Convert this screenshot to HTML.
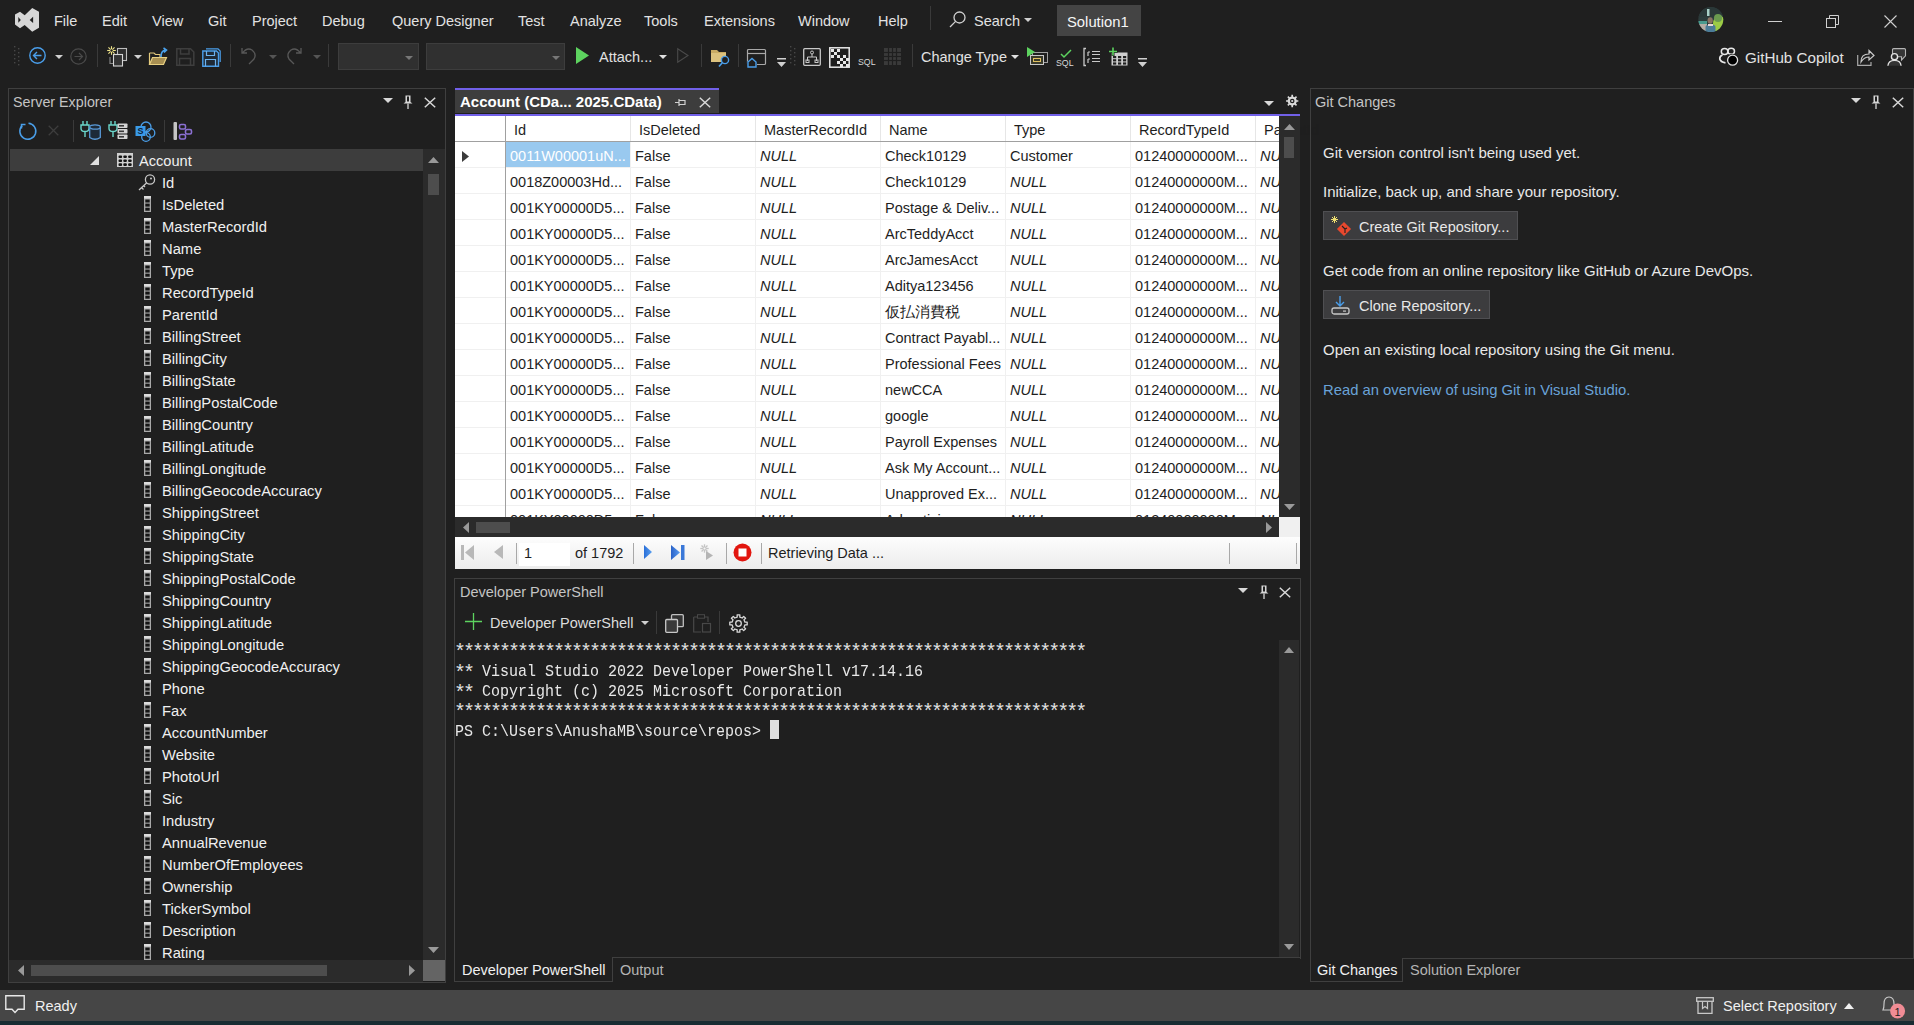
<!DOCTYPE html>
<html><head><meta charset="utf-8"><title>Visual Studio</title>
<style>
html,body{margin:0;padding:0;}
body{width:1914px;height:1025px;overflow:hidden;background:#1f1f1f;position:relative;font-family:"Liberation Sans",sans-serif;}
.t{position:absolute;white-space:nowrap;line-height:1;font-family:"Liberation Sans",sans-serif;}
.m{position:absolute;white-space:pre;line-height:1;font-family:"Liberation Mono",monospace;}
.r{position:absolute;}
svg.r{overflow:visible;}
</style></head><body>

<svg class="r" style="left:15px;top:7px;" width="25" height="26" viewBox="0 0 25 26"><path d="M5,4.8 L0,7.6 V17.6 L5,21.2 L9.7,18 L17.2,24.8 L24,20.75 V4.8 L17.2,0.9 L9.7,8.25 Z" fill="#d6d6d6"/><polygon points="3.3,10.1 3.3,15.75 5.8,12.9" fill="#1f1f1f"/><polygon points="18.1,9.8 18.1,16 14.7,12.9" fill="#1f1f1f"/></svg>
<div class="t " style="left:54px;top:13.73px;font-size:14.5px;color:#e2e2e2;">File</div>
<div class="t " style="left:102px;top:13.73px;font-size:14.5px;color:#e2e2e2;">Edit</div>
<div class="t " style="left:152px;top:13.73px;font-size:14.5px;color:#e2e2e2;">View</div>
<div class="t " style="left:208px;top:13.73px;font-size:14.5px;color:#e2e2e2;">Git</div>
<div class="t " style="left:252px;top:13.73px;font-size:14.5px;color:#e2e2e2;">Project</div>
<div class="t " style="left:322px;top:13.73px;font-size:14.5px;color:#e2e2e2;">Debug</div>
<div class="t " style="left:392px;top:13.73px;font-size:14.5px;color:#e2e2e2;">Query Designer</div>
<div class="t " style="left:518px;top:13.73px;font-size:14.5px;color:#e2e2e2;">Test</div>
<div class="t " style="left:570px;top:13.73px;font-size:14.5px;color:#e2e2e2;">Analyze</div>
<div class="t " style="left:644px;top:13.73px;font-size:14.5px;color:#e2e2e2;">Tools</div>
<div class="t " style="left:704px;top:13.73px;font-size:14.5px;color:#e2e2e2;">Extensions</div>
<div class="t " style="left:798px;top:13.73px;font-size:14.5px;color:#e2e2e2;">Window</div>
<div class="t " style="left:878px;top:13.73px;font-size:14.5px;color:#e2e2e2;">Help</div>
<div class="r" style="left:930px;top:6px;width:1px;height:24px;background:#3a3a3a;"></div>
<svg class="r" style="left:949px;top:11px;" width="17" height="17" viewBox="0 0 17 17"><circle cx="10.5" cy="6.5" r="5.5" fill="none" stroke="#d0d0d0" stroke-width="1.3"/><line x1="6.6" y1="10.4" x2="1" y2="16" stroke="#d0d0d0" stroke-width="1.3"/></svg>
<div class="t " style="left:974px;top:13.73px;font-size:14.5px;color:#e2e2e2;">Search</div>
<svg class="r" style="left:1024px;top:18px;" width="8" height="4" viewBox="0 0 8 4"><polygon points="0,0 8,0 4.0,4" fill="#d0d0d0"/></svg>
<div class="r" style="left:1057px;top:5px;width:84px;height:31px;background:#444444;"></div>
<div class="t " style="left:1067px;top:14.97px;font-size:14.8px;color:#f6f6f6;">Solution1</div>
<svg class="r" style="left:1698px;top:7px;" width="26" height="26" viewBox="0 0 26 26"><defs><clipPath id="avc"><circle cx="12.8" cy="12.6" r="12.5"/></clipPath><filter id="avb"><feGaussianBlur stdDeviation="0.7"/></filter></defs><g clip-path="url(#avc)"><rect x="0" y="0" width="26" height="26" fill="#2c3c3c"/><g filter="url(#avb)"><rect x="0" y="0" width="26" height="10" fill="#2a3838"/><rect x="0" y="14" width="9" height="3" fill="#4a9a8e"/><rect x="0" y="17" width="9" height="9" fill="#b4aca4"/><ellipse cx="21" cy="17" rx="6" ry="9" fill="#9ccc44"/><ellipse cx="20" cy="11" rx="4" ry="4" fill="#6a9a50"/><rect x="9" y="2" width="2.5" height="7" fill="#a8d0c8"/><rect x="7.5" y="18" width="10" height="9" rx="2" fill="#4c7c98"/><rect x="10" y="17" width="5" height="2" fill="#e8d8d8"/><ellipse cx="12.2" cy="13.5" rx="2.6" ry="3.2" fill="#8a7264"/></g></g></svg>
<div class="r" style="left:1768px;top:21px;width:14px;height:1px;background:#d0d0d0;"></div>
<svg class="r" style="left:1826px;top:15px;" width="13" height="13" viewBox="0 0 13 13"><rect x="0.5" y="3.5" width="9" height="9" fill="none" stroke="#d0d0d0"/><path d="M3.5,3.5 V0.5 H12.5 V9.5 H9.5" fill="none" stroke="#d0d0d0"/></svg>
<svg class="r" style="left:1884px;top:15px;" width="13" height="13" viewBox="0 0 13 13"><path d="M0.5,0.5 L12.5,12.5 M12.5,0.5 L0.5,12.5" stroke="#d0d0d0" stroke-width="1.1"/></svg>
<svg class="r" style="left:14px;top:46px;" width="6" height="21" viewBox="0 0 6 21"><rect x="0" y="0" width="1.4" height="1.4" fill="#474747"/><rect x="4" y="2" width="1.4" height="1.4" fill="#474747"/><rect x="0" y="4" width="1.4" height="1.4" fill="#474747"/><rect x="4" y="6" width="1.4" height="1.4" fill="#474747"/><rect x="0" y="8" width="1.4" height="1.4" fill="#474747"/><rect x="4" y="10" width="1.4" height="1.4" fill="#474747"/><rect x="0" y="12" width="1.4" height="1.4" fill="#474747"/><rect x="4" y="14" width="1.4" height="1.4" fill="#474747"/><rect x="0" y="16" width="1.4" height="1.4" fill="#474747"/><rect x="4" y="18" width="1.4" height="1.4" fill="#474747"/></svg>
<svg class="r" style="left:29px;top:47px;" width="17" height="17" viewBox="0 0 17 17"><circle cx="8.5" cy="8.5" r="7.7" fill="none" stroke="#4a9eea" stroke-width="1.4"/><path d="M12.5,8.5 H4.5 M8,5 L4.5,8.5 L8,12" fill="none" stroke="#4a9eea" stroke-width="1.4"/></svg>
<svg class="r" style="left:55px;top:55px;" width="8" height="4" viewBox="0 0 8 4"><polygon points="0,0 8,0 4.0,4" fill="#d0d0d0"/></svg>
<svg class="r" style="left:70px;top:48px;" width="17" height="17" viewBox="0 0 17 17"><circle cx="8.5" cy="8.5" r="7.7" fill="none" stroke="#4a4a4a" stroke-width="1.2"/><path d="M4.5,8.5 H12.5 M9,5 L12.5,8.5 L9,12" fill="none" stroke="#4a4a4a" stroke-width="1.2"/></svg>
<div class="r" style="left:97px;top:44px;width:1px;height:23px;background:#3a3a3a;"></div>
<svg class="r" style="left:107px;top:46px;" width="21" height="21" viewBox="0 0 21 21"><path d="M3,11 V17.5 H6" fill="none" stroke="#8a8a8a" stroke-width="1.1"/><rect x="10.5" y="2.5" width="9" height="12" fill="#2e2e2e" stroke="#bdbdbd" stroke-width="1.1"/><rect x="6.5" y="8.5" width="9" height="11.5" fill="#333" stroke="#d6d6d6" stroke-width="1.1"/><line x1="5.70" y1="4.50" x2="8.80" y2="4.50" stroke="#efe48a" stroke-width="1.1"/><line x1="5.35" y1="5.35" x2="7.54" y2="7.54" stroke="#efe48a" stroke-width="1.1"/><line x1="4.50" y1="5.70" x2="4.50" y2="8.80" stroke="#efe48a" stroke-width="1.1"/><line x1="3.65" y1="5.35" x2="1.46" y2="7.54" stroke="#efe48a" stroke-width="1.1"/><line x1="3.30" y1="4.50" x2="0.20" y2="4.50" stroke="#efe48a" stroke-width="1.1"/><line x1="3.65" y1="3.65" x2="1.46" y2="1.46" stroke="#efe48a" stroke-width="1.1"/><line x1="4.50" y1="3.30" x2="4.50" y2="0.20" stroke="#efe48a" stroke-width="1.1"/><line x1="5.35" y1="3.65" x2="7.54" y2="1.46" stroke="#efe48a" stroke-width="1.1"/></svg>
<svg class="r" style="left:134px;top:55px;" width="8" height="4" viewBox="0 0 8 4"><polygon points="0,0 8,0 4.0,4" fill="#d0d0d0"/></svg>
<svg class="r" style="left:148px;top:47px;" width="20" height="19" viewBox="0 0 20 19"><path d="M1.5,6 H6 L7.5,7.5 H12 V10 M1.5,6 V17.5" fill="none" stroke="#e3ca7c" stroke-width="1.2"/><path d="M1.5,17.5 L4.5,10.5 H18.5 L15.5,17.5 Z" fill="#a88f52" stroke="#e8d082" stroke-width="1.2"/><path d="M13,10 Q13,4 17,3 M15.5,0.8 L18.5,3 L16,5.5" fill="none" stroke="#4aa3ee" stroke-width="1.6"/></svg>
<svg class="r" style="left:176px;top:48px;" width="19" height="18" viewBox="0 0 19 18"><path d="M0.8,0.8 H14.5 L17.8,4 V17.2 H0.8 Z M4.5,0.8 V6 H13 V0.8 M3.5,17.2 V10.5 H14.5 V17.2" fill="none" stroke="#3e3e3e" stroke-width="1.5"/></svg>
<svg class="r" style="left:202px;top:48px;" width="19" height="19" viewBox="0 0 19 19"><path d="M4,0.8 H16 L18.2,3 V14" fill="none" stroke="#4a9eea" stroke-width="1.2"/><path d="M0.8,3 H14.5 L16.5,5 V18.2 H0.8 Z" fill="#1f2a36" stroke="#4a9eea" stroke-width="1.4"/><path d="M4.5,3 V7.5 H12.5 V3 M3.5,18.2 V11.5 H13.5 V18.2" fill="none" stroke="#6cb2ee" stroke-width="1.2"/></svg>
<div class="r" style="left:230px;top:44px;width:1px;height:23px;background:#3a3a3a;"></div>
<svg class="r" style="left:241px;top:47px;" width="17" height="18" viewBox="0 0 17 18"><path d="M1,1 V6 H6 M1.5,6 Q6,0 11,3 Q16,7 13,12 L8,17" fill="none" stroke="#585858" stroke-width="1.3"/></svg>
<svg class="r" style="left:269px;top:55px;" width="8" height="4" viewBox="0 0 8 4"><polygon points="0,0 8,0 4.0,4" fill="#555"/></svg>
<svg class="r" style="left:285px;top:47px;" width="17" height="18" viewBox="0 0 17 18"><path d="M16,1 V6 H11 M15.5,6 Q11,0 6,3 Q1,7 4,12 L9,17" fill="none" stroke="#585858" stroke-width="1.3"/></svg>
<svg class="r" style="left:313px;top:55px;" width="8" height="4" viewBox="0 0 8 4"><polygon points="0,0 8,0 4.0,4" fill="#555"/></svg>
<div class="r" style="left:328px;top:44px;width:1px;height:23px;background:#3a3a3a;"></div>
<div class="r" style="left:338px;top:43px;width:81px;height:27px;background:#303030;border:1px solid #3d3d3d;box-sizing:border-box;"></div>
<svg class="r" style="left:405px;top:56px;" width="8" height="4" viewBox="0 0 8 4"><polygon points="0,0 8,0 4.0,4" fill="#777"/></svg>
<div class="r" style="left:426px;top:43px;width:139px;height:27px;background:#303030;border:1px solid #3d3d3d;box-sizing:border-box;"></div>
<svg class="r" style="left:552px;top:56px;" width="8" height="4" viewBox="0 0 8 4"><polygon points="0,0 8,0 4.0,4" fill="#777"/></svg>
<svg class="r" style="left:576px;top:47px;" width="14" height="17" viewBox="0 0 14 17"><polygon points="0,0 13,8.5 0,17" fill="#5dd35f"/></svg>
<div class="t " style="left:599px;top:49.73px;font-size:14.5px;color:#e2e2e2;">Attach...</div>
<svg class="r" style="left:659px;top:55px;" width="8" height="4" viewBox="0 0 8 4"><polygon points="0,0 8,0 4.0,4" fill="#e0e0e0"/></svg>
<svg class="r" style="left:677px;top:48px;" width="12" height="15" viewBox="0 0 12 15"><polygon points="0.7,0.7 11,7.5 0.7,14.3" fill="none" stroke="#4a4a4a" stroke-width="1.1"/></svg>
<div class="r" style="left:701px;top:44px;width:1px;height:23px;background:#3a3a3a;"></div>
<svg class="r" style="left:711px;top:49px;" width="20" height="19" viewBox="0 0 20 19"><path d="M0,1 H6 L8,3 H15 V13 H0 Z" fill="#c9ab64"/><path d="M0,4 H15 V13 H0 Z" fill="#dcc27e"/><circle cx="14" cy="11" r="3.6" fill="#1f1f1f" stroke="#4a9eea" stroke-width="1.4"/><line x1="11.5" y1="13.5" x2="8" y2="17.5" stroke="#4a9eea" stroke-width="1.6"/></svg>
<div class="r" style="left:738px;top:44px;width:1px;height:23px;background:#3a3a3a;"></div>
<svg class="r" style="left:747px;top:49px;" width="20" height="19" viewBox="0 0 20 19"><rect x="0.5" y="0.5" width="18" height="15" rx="1" fill="none" stroke="#a8a8a8" stroke-width="1.2"/><line x1="0.5" y1="4.5" x2="18.5" y2="4.5" stroke="#a8a8a8" stroke-width="1.2"/><path d="M0,13 L5,8.5 L10,13 V18.5 H0 Z" fill="#1f1f1f" stroke="none"/><path d="M1,13 L5,9.5 L9,13 V18 H1 Z" fill="none" stroke="#4a9eea" stroke-width="1.4"/></svg>
<svg class="r" style="left:777px;top:58px;" width="9" height="10" viewBox="0 0 9 10"><rect x="0" y="0" width="9" height="1.5" fill="#d0d0d0"/><polygon points="0,4 9,4 4.5,9" fill="#d0d0d0"/></svg>
<svg class="r" style="left:790px;top:46px;" width="6" height="21" viewBox="0 0 6 21"><rect x="0" y="0" width="1.4" height="1.4" fill="#474747"/><rect x="4" y="2" width="1.4" height="1.4" fill="#474747"/><rect x="0" y="4" width="1.4" height="1.4" fill="#474747"/><rect x="4" y="6" width="1.4" height="1.4" fill="#474747"/><rect x="0" y="8" width="1.4" height="1.4" fill="#474747"/><rect x="4" y="10" width="1.4" height="1.4" fill="#474747"/><rect x="0" y="12" width="1.4" height="1.4" fill="#474747"/><rect x="4" y="14" width="1.4" height="1.4" fill="#474747"/><rect x="0" y="16" width="1.4" height="1.4" fill="#474747"/><rect x="4" y="18" width="1.4" height="1.4" fill="#474747"/></svg>
<svg class="r" style="left:803px;top:48px;" width="18" height="18" viewBox="0 0 18 18"><rect x="0.7" y="0.7" width="16.6" height="16.6" rx="1" fill="none" stroke="#c8c8c8" stroke-width="1.3"/><circle cx="9" cy="4.5" r="1.5" fill="none" stroke="#c8c8c8"/><path d="M9,6 V9 M4.5,13 V9 H13.5 V13" fill="none" stroke="#c8c8c8"/><rect x="3" y="12" width="3" height="2.5" fill="none" stroke="#c8c8c8"/><rect x="12" y="12" width="3" height="2.5" fill="none" stroke="#c8c8c8"/></svg>
<svg class="r" style="left:829px;top:47px;" width="21" height="21" viewBox="0 0 21 21"><rect x="0.8" y="0.8" width="19.4" height="19.4" fill="none" stroke="#e8e8e8" stroke-width="1.5"/><rect x="2" y="2" width="3" height="3" fill="#e8e8e8"/><rect x="8" y="2" width="3" height="3" fill="#e8e8e8"/><rect x="5" y="5" width="3" height="3" fill="#e8e8e8"/><rect x="2" y="8" width="3" height="3" fill="#e8e8e8"/><rect x="8" y="8" width="3" height="3" fill="#e8e8e8"/><rect x="14" y="8" width="3" height="3" fill="#e8e8e8"/><rect x="11" y="11" width="3" height="3" fill="#e8e8e8"/><rect x="17" y="11" width="3" height="3" fill="#e8e8e8"/><rect x="8" y="14" width="3" height="3" fill="#e8e8e8"/><rect x="14" y="14" width="3" height="3" fill="#e8e8e8"/><rect x="11" y="17" width="3" height="3" fill="#e8e8e8"/><rect x="17" y="17" width="3" height="3" fill="#e8e8e8"/></svg>
<div class="t " style="left:858px;top:58.35px;font-size:8.8px;color:#d8d8d8;">SQL</div>
<svg class="r" style="left:884px;top:48px;" width="17" height="17" viewBox="0 0 17 17"><rect x="0" y="0" width="17" height="17" fill="#3a3a3a"/><line x1="4.5" y1="0" x2="4.5" y2="17" stroke="#1f1f1f" stroke-width="1.2"/><line x1="0" y1="4.5" x2="17" y2="4.5" stroke="#1f1f1f" stroke-width="1.2"/><line x1="8.5" y1="0" x2="8.5" y2="17" stroke="#1f1f1f" stroke-width="1.2"/><line x1="0" y1="8.5" x2="17" y2="8.5" stroke="#1f1f1f" stroke-width="1.2"/><line x1="12.5" y1="0" x2="12.5" y2="17" stroke="#1f1f1f" stroke-width="1.2"/><line x1="0" y1="12.5" x2="17" y2="12.5" stroke="#1f1f1f" stroke-width="1.2"/></svg>
<div class="r" style="left:912px;top:44px;width:1px;height:23px;background:#3a3a3a;"></div>
<div class="t " style="left:921px;top:49.73px;font-size:14.5px;color:#e2e2e2;">Change Type</div>
<svg class="r" style="left:1011px;top:55px;" width="8" height="4" viewBox="0 0 8 4"><polygon points="0,0 8,0 4.0,4" fill="#e0e0e0"/></svg>
<svg class="r" style="left:1027px;top:47px;" width="22" height="19" viewBox="0 0 22 19"><rect x="5.5" y="5.5" width="15" height="10" fill="none" stroke="#a0a0a0"/><rect x="3.5" y="8.5" width="13" height="9" fill="#3a3a2a" stroke="#c8c8c8"/><rect x="6.5" y="11.5" width="7" height="3" fill="none" stroke="#e0c060"/><polygon points="0,0 8,5 0,10" fill="#5dd35f"/></svg>
<svg class="r" style="left:1055px;top:49px;" width="17" height="19" viewBox="0 0 17 19"><path d="M6,5 L9,8 L16,1" fill="none" stroke="#5dd35f" stroke-width="1.5"/></svg>
<div class="t " style="left:1056px;top:59.05px;font-size:8.8px;color:#d8d8d8;">SQL</div>
<svg class="r" style="left:1083px;top:48px;" width="18" height="18" viewBox="0 0 18 18"><path d="M3,0.5 H1 V17.5 H3" fill="none" stroke="#c8c8c8" stroke-width="1.3"/><path d="M5,4 H7 M5,4 V8 M5,11 H7 M5,11 V15 M9,3.5 H17 M9,6.5 H17 M9,10.5 H17 M9,13.5 H17" fill="none" stroke="#c8c8c8" stroke-width="1.2"/></svg>
<svg class="r" style="left:1108px;top:47px;" width="21" height="20" viewBox="0 0 21 20"><rect x="3.5" y="5.5" width="16" height="13" fill="#cfcfcf"/><rect x="5" y="9" width="3.2" height="2.2" fill="#202020"/><rect x="5" y="12.2" width="3.2" height="2.2" fill="#202020"/><rect x="5" y="15.4" width="3.2" height="2.2" fill="#202020"/><rect x="10" y="9" width="3.2" height="2.2" fill="#202020"/><rect x="10" y="12.2" width="3.2" height="2.2" fill="#202020"/><rect x="10" y="15.4" width="3.2" height="2.2" fill="#202020"/><rect x="15" y="9" width="3.2" height="2.2" fill="#202020"/><rect x="15" y="12.2" width="3.2" height="2.2" fill="#202020"/><rect x="15" y="15.4" width="3.2" height="2.2" fill="#202020"/><path d="M5,0 V9 M0.5,4.5 H9.5" stroke="#1f1f1f" stroke-width="3"/><path d="M5,0.5 V8.5 M1,4.5 H9" stroke="#5dd35f" stroke-width="1.6"/></svg>
<svg class="r" style="left:1138px;top:58px;" width="9" height="10" viewBox="0 0 9 10"><rect x="0" y="0" width="9" height="1.5" fill="#d0d0d0"/><polygon points="0,4 9,4 4.5,9" fill="#d0d0d0"/></svg>
<svg class="r" style="left:1718px;top:47px;" width="21" height="20" viewBox="0 0 21 20"><ellipse cx="6.6" cy="4.4" rx="3.3" ry="3" fill="none" stroke="#e8e8e8" stroke-width="1.5"/><ellipse cx="13.2" cy="4.2" rx="3.3" ry="3" fill="none" stroke="#e8e8e8" stroke-width="1.5"/><path d="M4.5,8 Q1.5,9 1.8,12 Q2.5,15 7.5,15.8" fill="none" stroke="#e8e8e8" stroke-width="1.7"/><circle cx="14.6" cy="13.2" r="5.2" fill="#000" stroke="#1f1f1f" stroke-width="2.6"/><circle cx="14.6" cy="13.2" r="5" fill="#000" stroke="#e0e0e0" stroke-width="1.3"/></svg>
<div class="t " style="left:1745px;top:49.63px;font-size:15.2px;color:#e2e2e2;">GitHub Copilot</div>
<svg class="r" style="left:1857px;top:49px;" width="18" height="17" viewBox="0 0 18 17"><path d="M0.7,6 V16.3 H14 V13" fill="none" stroke="#a8a8a8" stroke-width="1.2"/><path d="M4,13 Q4,5 12,5 V1.5 L17,6.5 L12,11 V8 Q7,8 4,13 Z" fill="none" stroke="#c8c8c8" stroke-width="1.2"/></svg>
<svg class="r" style="left:1887px;top:48px;" width="19" height="18" viewBox="0 0 19 18"><path d="M5.5,8.7 V1.8 Q5.5,0.6 6.7,0.6 H17.3 Q18.5,0.6 18.5,1.8 V7.8 L14.5,12 V8.7 Z" fill="#353535" stroke="#b4b4b4" stroke-width="1.1"/><path d="M0.9,17.8 Q1.3,12.3 7.5,12.3 Q13.7,12.3 14.1,17.8" fill="#343434" stroke="#e2e2e2" stroke-width="1.3"/><circle cx="7.5" cy="8.7" r="3.1" fill="#2a2a2a" stroke="#e2e2e2" stroke-width="1.4"/></svg>
<div class="r" style="left:8px;top:88px;width:438px;height:895px;border:1px solid #3f3f3f;box-sizing:border-box;"></div>
<div class="t " style="left:13px;top:95.40px;font-size:14.3px;color:#c4c4c4;">Server Explorer</div>
<svg class="r" style="left:383px;top:98px;" width="10" height="5" viewBox="0 0 10 5"><polygon points="0,0 10,0 5.0,5" fill="#d8d8d8"/></svg>
<svg class="r" style="left:403px;top:95px;" width="10" height="14" viewBox="0 0 10 14"><path d="M2.5,0.5 H7.5 V7 L9.5,8.5 H0.5 L2.5,7 Z" fill="#d8d8d8" stroke="none"/><rect x="4" y="1.5" width="2" height="5" fill="#1f1f1f"/><line x1="5" y1="8.5" x2="5" y2="14" stroke="#d8d8d8" stroke-width="1.3"/></svg>
<svg class="r" style="left:424px;top:97px;" width="12" height="11" viewBox="0 0 12 11"><path d="M0.8,0.8 L11.2,10.2 M11.2,0.8 L0.8,10.2" stroke="#d8d8d8" stroke-width="1.5"/></svg>
<svg class="r" style="left:18px;top:122px;" width="19" height="19" viewBox="0 0 19 19"><path d="M4.2,3.6 A8,8 0 1 0 10.5,1.3" fill="none" stroke="#4a9ee8" stroke-width="1.5"/><path d="M3.5,6.5 V2.5 H7.5" fill="none" stroke="#4a9ee8" stroke-width="1.5"/></svg>
<svg class="r" style="left:48px;top:125px;" width="11" height="11" viewBox="0 0 11 11"><path d="M0.7,0.7 L10.3,10.3 M10.3,0.7 L0.7,10.3" stroke="#3d3d3d" stroke-width="1.3"/></svg>
<div class="r" style="left:73px;top:120px;width:1px;height:22px;background:#3a3a3a;"></div>
<svg class="r" style="left:80px;top:121px;" width="22" height="20" viewBox="0 0 22 20"><path d="M3,0 V4 M7,0 V4 M1,4 H9 V7.5 Q9,10.5 5,10.5 Q1,10.5 1,7.5 Z M5,10.5 V16" fill="none" stroke="#6ad6ca" stroke-width="1.4"/><path d="M9.7,6 V16.5 Q15,20 20.3,16.5 V6" fill="#1d2a38" stroke="#5a9ad8" stroke-width="1.3"/><ellipse cx="15" cy="6" rx="5.3" ry="2.2" fill="#1d2a38" stroke="#5a9ad8" stroke-width="1.3"/></svg>
<svg class="r" style="left:108px;top:121px;" width="22" height="20" viewBox="0 0 22 20"><path d="M3,0 V4 M7,0 V4 M1,4 H9 V7.5 Q9,10.5 5,10.5 Q1,10.5 1,7.5 Z M5,10.5 V16" fill="none" stroke="#6ad6ca" stroke-width="1.4"/><rect x="9.5" y="2.5" width="10" height="4.6" rx="0.8" fill="#d4d4d4"/><rect x="11" y="4.0" width="5" height="1.6" fill="#3a3a3a"/><rect x="9.5" y="8" width="10" height="4.6" rx="0.8" fill="#d4d4d4"/><rect x="11" y="9.5" width="5" height="1.6" fill="#3a3a3a"/><rect x="9.5" y="13.5" width="10" height="4.6" rx="0.8" fill="#d4d4d4"/><rect x="11" y="15.0" width="5" height="1.6" fill="#3a3a3a"/></svg>
<svg class="r" style="left:134px;top:121px;" width="22" height="21" viewBox="0 0 22 21"><circle cx="12" cy="6" r="5" fill="none" stroke="#4a9ee8" stroke-width="1.3"/><circle cx="16.5" cy="12" r="4.3" fill="none" stroke="#4a9ee8" stroke-width="1.3"/><circle cx="12" cy="16" r="4.3" fill="none" stroke="#4a9ee8" stroke-width="1.3"/><rect x="1.5" y="5" width="10" height="10" fill="#3a9ae8"/><text x="6.5" y="13.2" font-size="9" font-weight="bold" text-anchor="middle" fill="#10243a" font-family="Liberation Sans">S</text></svg>
<div class="r" style="left:164px;top:120px;width:1px;height:22px;background:#3a3a3a;"></div>
<svg class="r" style="left:173px;top:122px;" width="20" height="19" viewBox="0 0 20 19"><rect x="0.5" y="0" width="3.5" height="18" rx="1" fill="#c4c4c4"/><rect x="6.5" y="2.5" width="6" height="4.5" rx="1.5" fill="none" stroke="#8b70d2" stroke-width="1.6"/><rect x="12.5" y="7.5" width="6" height="4.5" rx="1.5" fill="none" stroke="#8b70d2" stroke-width="1.6"/><rect x="6.5" y="12.5" width="6" height="4.5" rx="1.5" fill="none" stroke="#8b70d2" stroke-width="1.6"/></svg>
<div class="r" style="left:10px;top:149px;width:413px;height:22px;background:#3d3d3d;"></div>
<div class="r" style="left:423px;top:149px;width:22px;height:811px;background:#2b2b2b;"></div>
<svg class="r" style="left:428px;top:157px;" width="11" height="6" viewBox="0 0 11 6"><polygon points="0,6 11,6 5.5,0" fill="#999999"/></svg>
<div class="r" style="left:428px;top:174px;width:11px;height:21px;background:#4d4d4d;"></div>
<svg class="r" style="left:428px;top:947px;" width="11" height="6" viewBox="0 0 11 6"><polygon points="0,0 11,0 5.5,6" fill="#9a9a9a"/></svg>
<svg class="r" style="left:90px;top:156px;" width="9" height="9" viewBox="0 0 9 9"><polygon points="9,0 9,9 0,9" fill="#e0e0e0"/></svg>
<svg class="r" style="left:117px;top:153px;" width="16" height="14" viewBox="0 0 16 14"><rect x="0" y="0" width="16" height="14" fill="#cfcfcf"/><rect x="1.5" y="2.5" width="3.6" height="2.6" rx="1" fill="#151515"/><rect x="1.5" y="6.5" width="3.6" height="2.6" rx="1" fill="#151515"/><rect x="1.5" y="10.3" width="3.6" height="2.6" rx="1" fill="#151515"/><rect x="6.3" y="2.5" width="3.6" height="2.6" rx="1" fill="#151515"/><rect x="6.3" y="6.5" width="3.6" height="2.6" rx="1" fill="#151515"/><rect x="6.3" y="10.3" width="3.6" height="2.6" rx="1" fill="#151515"/><rect x="11.1" y="2.5" width="3.6" height="2.6" rx="1" fill="#151515"/><rect x="11.1" y="6.5" width="3.6" height="2.6" rx="1" fill="#151515"/><rect x="11.1" y="10.3" width="3.6" height="2.6" rx="1" fill="#151515"/></svg>
<div class="t " style="left:139px;top:153.64px;font-size:14.6px;color:#f0f0f0;">Account</div>
<svg class="r" style="left:138px;top:174px;" width="18" height="17" viewBox="0 0 18 17"><circle cx="12" cy="5.5" r="4.6" fill="none" stroke="#c8c8c8" stroke-width="1.3"/><circle cx="13" cy="4.5" r="1" fill="#c8c8c8"/><path d="M8.8,8.7 L1,16 M3.5,13.5 L5.5,15.5 M5.5,11.5 L7,13" fill="none" stroke="#c8c8c8" stroke-width="1.3"/></svg>
<div class="t " style="left:162px;top:175.51px;font-size:14.75px;color:#f0f0f0;">Id</div>
<svg class="r" style="left:144px;top:196px;overflow:hidden;" width="7" height="16" viewBox="0 0 7 16"><rect x="0" y="0" width="7" height="16" fill="#a8a8a8"/><rect x="0" y="0" width="7" height="2.5" fill="#dcdcdc"/><rect x="1.3" y="3.5" width="4.4" height="3" fill="#141414"/><rect x="1.3" y="7.6" width="4.4" height="3" fill="#141414"/><rect x="1.3" y="11.7" width="4.4" height="3" fill="#141414"/></svg>
<div class="t " style="left:162px;top:197.51px;font-size:14.75px;color:#f0f0f0;">IsDeleted</div>
<svg class="r" style="left:144px;top:218px;overflow:hidden;" width="7" height="16" viewBox="0 0 7 16"><rect x="0" y="0" width="7" height="16" fill="#a8a8a8"/><rect x="0" y="0" width="7" height="2.5" fill="#dcdcdc"/><rect x="1.3" y="3.5" width="4.4" height="3" fill="#141414"/><rect x="1.3" y="7.6" width="4.4" height="3" fill="#141414"/><rect x="1.3" y="11.7" width="4.4" height="3" fill="#141414"/></svg>
<div class="t " style="left:162px;top:219.51px;font-size:14.75px;color:#f0f0f0;">MasterRecordId</div>
<svg class="r" style="left:144px;top:240px;overflow:hidden;" width="7" height="16" viewBox="0 0 7 16"><rect x="0" y="0" width="7" height="16" fill="#a8a8a8"/><rect x="0" y="0" width="7" height="2.5" fill="#dcdcdc"/><rect x="1.3" y="3.5" width="4.4" height="3" fill="#141414"/><rect x="1.3" y="7.6" width="4.4" height="3" fill="#141414"/><rect x="1.3" y="11.7" width="4.4" height="3" fill="#141414"/></svg>
<div class="t " style="left:162px;top:241.51px;font-size:14.75px;color:#f0f0f0;">Name</div>
<svg class="r" style="left:144px;top:262px;overflow:hidden;" width="7" height="16" viewBox="0 0 7 16"><rect x="0" y="0" width="7" height="16" fill="#a8a8a8"/><rect x="0" y="0" width="7" height="2.5" fill="#dcdcdc"/><rect x="1.3" y="3.5" width="4.4" height="3" fill="#141414"/><rect x="1.3" y="7.6" width="4.4" height="3" fill="#141414"/><rect x="1.3" y="11.7" width="4.4" height="3" fill="#141414"/></svg>
<div class="t " style="left:162px;top:263.51px;font-size:14.75px;color:#f0f0f0;">Type</div>
<svg class="r" style="left:144px;top:284px;overflow:hidden;" width="7" height="16" viewBox="0 0 7 16"><rect x="0" y="0" width="7" height="16" fill="#a8a8a8"/><rect x="0" y="0" width="7" height="2.5" fill="#dcdcdc"/><rect x="1.3" y="3.5" width="4.4" height="3" fill="#141414"/><rect x="1.3" y="7.6" width="4.4" height="3" fill="#141414"/><rect x="1.3" y="11.7" width="4.4" height="3" fill="#141414"/></svg>
<div class="t " style="left:162px;top:285.51px;font-size:14.75px;color:#f0f0f0;">RecordTypeId</div>
<svg class="r" style="left:144px;top:306px;overflow:hidden;" width="7" height="16" viewBox="0 0 7 16"><rect x="0" y="0" width="7" height="16" fill="#a8a8a8"/><rect x="0" y="0" width="7" height="2.5" fill="#dcdcdc"/><rect x="1.3" y="3.5" width="4.4" height="3" fill="#141414"/><rect x="1.3" y="7.6" width="4.4" height="3" fill="#141414"/><rect x="1.3" y="11.7" width="4.4" height="3" fill="#141414"/></svg>
<div class="t " style="left:162px;top:307.51px;font-size:14.75px;color:#f0f0f0;">ParentId</div>
<svg class="r" style="left:144px;top:328px;overflow:hidden;" width="7" height="16" viewBox="0 0 7 16"><rect x="0" y="0" width="7" height="16" fill="#a8a8a8"/><rect x="0" y="0" width="7" height="2.5" fill="#dcdcdc"/><rect x="1.3" y="3.5" width="4.4" height="3" fill="#141414"/><rect x="1.3" y="7.6" width="4.4" height="3" fill="#141414"/><rect x="1.3" y="11.7" width="4.4" height="3" fill="#141414"/></svg>
<div class="t " style="left:162px;top:329.51px;font-size:14.75px;color:#f0f0f0;">BillingStreet</div>
<svg class="r" style="left:144px;top:350px;overflow:hidden;" width="7" height="16" viewBox="0 0 7 16"><rect x="0" y="0" width="7" height="16" fill="#a8a8a8"/><rect x="0" y="0" width="7" height="2.5" fill="#dcdcdc"/><rect x="1.3" y="3.5" width="4.4" height="3" fill="#141414"/><rect x="1.3" y="7.6" width="4.4" height="3" fill="#141414"/><rect x="1.3" y="11.7" width="4.4" height="3" fill="#141414"/></svg>
<div class="t " style="left:162px;top:351.51px;font-size:14.75px;color:#f0f0f0;">BillingCity</div>
<svg class="r" style="left:144px;top:372px;overflow:hidden;" width="7" height="16" viewBox="0 0 7 16"><rect x="0" y="0" width="7" height="16" fill="#a8a8a8"/><rect x="0" y="0" width="7" height="2.5" fill="#dcdcdc"/><rect x="1.3" y="3.5" width="4.4" height="3" fill="#141414"/><rect x="1.3" y="7.6" width="4.4" height="3" fill="#141414"/><rect x="1.3" y="11.7" width="4.4" height="3" fill="#141414"/></svg>
<div class="t " style="left:162px;top:373.51px;font-size:14.75px;color:#f0f0f0;">BillingState</div>
<svg class="r" style="left:144px;top:394px;overflow:hidden;" width="7" height="16" viewBox="0 0 7 16"><rect x="0" y="0" width="7" height="16" fill="#a8a8a8"/><rect x="0" y="0" width="7" height="2.5" fill="#dcdcdc"/><rect x="1.3" y="3.5" width="4.4" height="3" fill="#141414"/><rect x="1.3" y="7.6" width="4.4" height="3" fill="#141414"/><rect x="1.3" y="11.7" width="4.4" height="3" fill="#141414"/></svg>
<div class="t " style="left:162px;top:395.51px;font-size:14.75px;color:#f0f0f0;">BillingPostalCode</div>
<svg class="r" style="left:144px;top:416px;overflow:hidden;" width="7" height="16" viewBox="0 0 7 16"><rect x="0" y="0" width="7" height="16" fill="#a8a8a8"/><rect x="0" y="0" width="7" height="2.5" fill="#dcdcdc"/><rect x="1.3" y="3.5" width="4.4" height="3" fill="#141414"/><rect x="1.3" y="7.6" width="4.4" height="3" fill="#141414"/><rect x="1.3" y="11.7" width="4.4" height="3" fill="#141414"/></svg>
<div class="t " style="left:162px;top:417.51px;font-size:14.75px;color:#f0f0f0;">BillingCountry</div>
<svg class="r" style="left:144px;top:438px;overflow:hidden;" width="7" height="16" viewBox="0 0 7 16"><rect x="0" y="0" width="7" height="16" fill="#a8a8a8"/><rect x="0" y="0" width="7" height="2.5" fill="#dcdcdc"/><rect x="1.3" y="3.5" width="4.4" height="3" fill="#141414"/><rect x="1.3" y="7.6" width="4.4" height="3" fill="#141414"/><rect x="1.3" y="11.7" width="4.4" height="3" fill="#141414"/></svg>
<div class="t " style="left:162px;top:439.51px;font-size:14.75px;color:#f0f0f0;">BillingLatitude</div>
<svg class="r" style="left:144px;top:460px;overflow:hidden;" width="7" height="16" viewBox="0 0 7 16"><rect x="0" y="0" width="7" height="16" fill="#a8a8a8"/><rect x="0" y="0" width="7" height="2.5" fill="#dcdcdc"/><rect x="1.3" y="3.5" width="4.4" height="3" fill="#141414"/><rect x="1.3" y="7.6" width="4.4" height="3" fill="#141414"/><rect x="1.3" y="11.7" width="4.4" height="3" fill="#141414"/></svg>
<div class="t " style="left:162px;top:461.51px;font-size:14.75px;color:#f0f0f0;">BillingLongitude</div>
<svg class="r" style="left:144px;top:482px;overflow:hidden;" width="7" height="16" viewBox="0 0 7 16"><rect x="0" y="0" width="7" height="16" fill="#a8a8a8"/><rect x="0" y="0" width="7" height="2.5" fill="#dcdcdc"/><rect x="1.3" y="3.5" width="4.4" height="3" fill="#141414"/><rect x="1.3" y="7.6" width="4.4" height="3" fill="#141414"/><rect x="1.3" y="11.7" width="4.4" height="3" fill="#141414"/></svg>
<div class="t " style="left:162px;top:483.51px;font-size:14.75px;color:#f0f0f0;">BillingGeocodeAccuracy</div>
<svg class="r" style="left:144px;top:504px;overflow:hidden;" width="7" height="16" viewBox="0 0 7 16"><rect x="0" y="0" width="7" height="16" fill="#a8a8a8"/><rect x="0" y="0" width="7" height="2.5" fill="#dcdcdc"/><rect x="1.3" y="3.5" width="4.4" height="3" fill="#141414"/><rect x="1.3" y="7.6" width="4.4" height="3" fill="#141414"/><rect x="1.3" y="11.7" width="4.4" height="3" fill="#141414"/></svg>
<div class="t " style="left:162px;top:505.51px;font-size:14.75px;color:#f0f0f0;">ShippingStreet</div>
<svg class="r" style="left:144px;top:526px;overflow:hidden;" width="7" height="16" viewBox="0 0 7 16"><rect x="0" y="0" width="7" height="16" fill="#a8a8a8"/><rect x="0" y="0" width="7" height="2.5" fill="#dcdcdc"/><rect x="1.3" y="3.5" width="4.4" height="3" fill="#141414"/><rect x="1.3" y="7.6" width="4.4" height="3" fill="#141414"/><rect x="1.3" y="11.7" width="4.4" height="3" fill="#141414"/></svg>
<div class="t " style="left:162px;top:527.51px;font-size:14.75px;color:#f0f0f0;">ShippingCity</div>
<svg class="r" style="left:144px;top:548px;overflow:hidden;" width="7" height="16" viewBox="0 0 7 16"><rect x="0" y="0" width="7" height="16" fill="#a8a8a8"/><rect x="0" y="0" width="7" height="2.5" fill="#dcdcdc"/><rect x="1.3" y="3.5" width="4.4" height="3" fill="#141414"/><rect x="1.3" y="7.6" width="4.4" height="3" fill="#141414"/><rect x="1.3" y="11.7" width="4.4" height="3" fill="#141414"/></svg>
<div class="t " style="left:162px;top:549.51px;font-size:14.75px;color:#f0f0f0;">ShippingState</div>
<svg class="r" style="left:144px;top:570px;overflow:hidden;" width="7" height="16" viewBox="0 0 7 16"><rect x="0" y="0" width="7" height="16" fill="#a8a8a8"/><rect x="0" y="0" width="7" height="2.5" fill="#dcdcdc"/><rect x="1.3" y="3.5" width="4.4" height="3" fill="#141414"/><rect x="1.3" y="7.6" width="4.4" height="3" fill="#141414"/><rect x="1.3" y="11.7" width="4.4" height="3" fill="#141414"/></svg>
<div class="t " style="left:162px;top:571.51px;font-size:14.75px;color:#f0f0f0;">ShippingPostalCode</div>
<svg class="r" style="left:144px;top:592px;overflow:hidden;" width="7" height="16" viewBox="0 0 7 16"><rect x="0" y="0" width="7" height="16" fill="#a8a8a8"/><rect x="0" y="0" width="7" height="2.5" fill="#dcdcdc"/><rect x="1.3" y="3.5" width="4.4" height="3" fill="#141414"/><rect x="1.3" y="7.6" width="4.4" height="3" fill="#141414"/><rect x="1.3" y="11.7" width="4.4" height="3" fill="#141414"/></svg>
<div class="t " style="left:162px;top:593.51px;font-size:14.75px;color:#f0f0f0;">ShippingCountry</div>
<svg class="r" style="left:144px;top:614px;overflow:hidden;" width="7" height="16" viewBox="0 0 7 16"><rect x="0" y="0" width="7" height="16" fill="#a8a8a8"/><rect x="0" y="0" width="7" height="2.5" fill="#dcdcdc"/><rect x="1.3" y="3.5" width="4.4" height="3" fill="#141414"/><rect x="1.3" y="7.6" width="4.4" height="3" fill="#141414"/><rect x="1.3" y="11.7" width="4.4" height="3" fill="#141414"/></svg>
<div class="t " style="left:162px;top:615.51px;font-size:14.75px;color:#f0f0f0;">ShippingLatitude</div>
<svg class="r" style="left:144px;top:636px;overflow:hidden;" width="7" height="16" viewBox="0 0 7 16"><rect x="0" y="0" width="7" height="16" fill="#a8a8a8"/><rect x="0" y="0" width="7" height="2.5" fill="#dcdcdc"/><rect x="1.3" y="3.5" width="4.4" height="3" fill="#141414"/><rect x="1.3" y="7.6" width="4.4" height="3" fill="#141414"/><rect x="1.3" y="11.7" width="4.4" height="3" fill="#141414"/></svg>
<div class="t " style="left:162px;top:637.51px;font-size:14.75px;color:#f0f0f0;">ShippingLongitude</div>
<svg class="r" style="left:144px;top:658px;overflow:hidden;" width="7" height="16" viewBox="0 0 7 16"><rect x="0" y="0" width="7" height="16" fill="#a8a8a8"/><rect x="0" y="0" width="7" height="2.5" fill="#dcdcdc"/><rect x="1.3" y="3.5" width="4.4" height="3" fill="#141414"/><rect x="1.3" y="7.6" width="4.4" height="3" fill="#141414"/><rect x="1.3" y="11.7" width="4.4" height="3" fill="#141414"/></svg>
<div class="t " style="left:162px;top:659.51px;font-size:14.75px;color:#f0f0f0;">ShippingGeocodeAccuracy</div>
<svg class="r" style="left:144px;top:680px;overflow:hidden;" width="7" height="16" viewBox="0 0 7 16"><rect x="0" y="0" width="7" height="16" fill="#a8a8a8"/><rect x="0" y="0" width="7" height="2.5" fill="#dcdcdc"/><rect x="1.3" y="3.5" width="4.4" height="3" fill="#141414"/><rect x="1.3" y="7.6" width="4.4" height="3" fill="#141414"/><rect x="1.3" y="11.7" width="4.4" height="3" fill="#141414"/></svg>
<div class="t " style="left:162px;top:681.51px;font-size:14.75px;color:#f0f0f0;">Phone</div>
<svg class="r" style="left:144px;top:702px;overflow:hidden;" width="7" height="16" viewBox="0 0 7 16"><rect x="0" y="0" width="7" height="16" fill="#a8a8a8"/><rect x="0" y="0" width="7" height="2.5" fill="#dcdcdc"/><rect x="1.3" y="3.5" width="4.4" height="3" fill="#141414"/><rect x="1.3" y="7.6" width="4.4" height="3" fill="#141414"/><rect x="1.3" y="11.7" width="4.4" height="3" fill="#141414"/></svg>
<div class="t " style="left:162px;top:703.51px;font-size:14.75px;color:#f0f0f0;">Fax</div>
<svg class="r" style="left:144px;top:724px;overflow:hidden;" width="7" height="16" viewBox="0 0 7 16"><rect x="0" y="0" width="7" height="16" fill="#a8a8a8"/><rect x="0" y="0" width="7" height="2.5" fill="#dcdcdc"/><rect x="1.3" y="3.5" width="4.4" height="3" fill="#141414"/><rect x="1.3" y="7.6" width="4.4" height="3" fill="#141414"/><rect x="1.3" y="11.7" width="4.4" height="3" fill="#141414"/></svg>
<div class="t " style="left:162px;top:725.51px;font-size:14.75px;color:#f0f0f0;">AccountNumber</div>
<svg class="r" style="left:144px;top:746px;overflow:hidden;" width="7" height="16" viewBox="0 0 7 16"><rect x="0" y="0" width="7" height="16" fill="#a8a8a8"/><rect x="0" y="0" width="7" height="2.5" fill="#dcdcdc"/><rect x="1.3" y="3.5" width="4.4" height="3" fill="#141414"/><rect x="1.3" y="7.6" width="4.4" height="3" fill="#141414"/><rect x="1.3" y="11.7" width="4.4" height="3" fill="#141414"/></svg>
<div class="t " style="left:162px;top:747.51px;font-size:14.75px;color:#f0f0f0;">Website</div>
<svg class="r" style="left:144px;top:768px;overflow:hidden;" width="7" height="16" viewBox="0 0 7 16"><rect x="0" y="0" width="7" height="16" fill="#a8a8a8"/><rect x="0" y="0" width="7" height="2.5" fill="#dcdcdc"/><rect x="1.3" y="3.5" width="4.4" height="3" fill="#141414"/><rect x="1.3" y="7.6" width="4.4" height="3" fill="#141414"/><rect x="1.3" y="11.7" width="4.4" height="3" fill="#141414"/></svg>
<div class="t " style="left:162px;top:769.51px;font-size:14.75px;color:#f0f0f0;">PhotoUrl</div>
<svg class="r" style="left:144px;top:790px;overflow:hidden;" width="7" height="16" viewBox="0 0 7 16"><rect x="0" y="0" width="7" height="16" fill="#a8a8a8"/><rect x="0" y="0" width="7" height="2.5" fill="#dcdcdc"/><rect x="1.3" y="3.5" width="4.4" height="3" fill="#141414"/><rect x="1.3" y="7.6" width="4.4" height="3" fill="#141414"/><rect x="1.3" y="11.7" width="4.4" height="3" fill="#141414"/></svg>
<div class="t " style="left:162px;top:791.51px;font-size:14.75px;color:#f0f0f0;">Sic</div>
<svg class="r" style="left:144px;top:812px;overflow:hidden;" width="7" height="16" viewBox="0 0 7 16"><rect x="0" y="0" width="7" height="16" fill="#a8a8a8"/><rect x="0" y="0" width="7" height="2.5" fill="#dcdcdc"/><rect x="1.3" y="3.5" width="4.4" height="3" fill="#141414"/><rect x="1.3" y="7.6" width="4.4" height="3" fill="#141414"/><rect x="1.3" y="11.7" width="4.4" height="3" fill="#141414"/></svg>
<div class="t " style="left:162px;top:813.51px;font-size:14.75px;color:#f0f0f0;">Industry</div>
<svg class="r" style="left:144px;top:834px;overflow:hidden;" width="7" height="16" viewBox="0 0 7 16"><rect x="0" y="0" width="7" height="16" fill="#a8a8a8"/><rect x="0" y="0" width="7" height="2.5" fill="#dcdcdc"/><rect x="1.3" y="3.5" width="4.4" height="3" fill="#141414"/><rect x="1.3" y="7.6" width="4.4" height="3" fill="#141414"/><rect x="1.3" y="11.7" width="4.4" height="3" fill="#141414"/></svg>
<div class="t " style="left:162px;top:835.51px;font-size:14.75px;color:#f0f0f0;">AnnualRevenue</div>
<svg class="r" style="left:144px;top:856px;overflow:hidden;" width="7" height="16" viewBox="0 0 7 16"><rect x="0" y="0" width="7" height="16" fill="#a8a8a8"/><rect x="0" y="0" width="7" height="2.5" fill="#dcdcdc"/><rect x="1.3" y="3.5" width="4.4" height="3" fill="#141414"/><rect x="1.3" y="7.6" width="4.4" height="3" fill="#141414"/><rect x="1.3" y="11.7" width="4.4" height="3" fill="#141414"/></svg>
<div class="t " style="left:162px;top:857.51px;font-size:14.75px;color:#f0f0f0;">NumberOfEmployees</div>
<svg class="r" style="left:144px;top:878px;overflow:hidden;" width="7" height="16" viewBox="0 0 7 16"><rect x="0" y="0" width="7" height="16" fill="#a8a8a8"/><rect x="0" y="0" width="7" height="2.5" fill="#dcdcdc"/><rect x="1.3" y="3.5" width="4.4" height="3" fill="#141414"/><rect x="1.3" y="7.6" width="4.4" height="3" fill="#141414"/><rect x="1.3" y="11.7" width="4.4" height="3" fill="#141414"/></svg>
<div class="t " style="left:162px;top:879.51px;font-size:14.75px;color:#f0f0f0;">Ownership</div>
<svg class="r" style="left:144px;top:900px;overflow:hidden;" width="7" height="16" viewBox="0 0 7 16"><rect x="0" y="0" width="7" height="16" fill="#a8a8a8"/><rect x="0" y="0" width="7" height="2.5" fill="#dcdcdc"/><rect x="1.3" y="3.5" width="4.4" height="3" fill="#141414"/><rect x="1.3" y="7.6" width="4.4" height="3" fill="#141414"/><rect x="1.3" y="11.7" width="4.4" height="3" fill="#141414"/></svg>
<div class="t " style="left:162px;top:901.51px;font-size:14.75px;color:#f0f0f0;">TickerSymbol</div>
<svg class="r" style="left:144px;top:922px;overflow:hidden;" width="7" height="16" viewBox="0 0 7 16"><rect x="0" y="0" width="7" height="16" fill="#a8a8a8"/><rect x="0" y="0" width="7" height="2.5" fill="#dcdcdc"/><rect x="1.3" y="3.5" width="4.4" height="3" fill="#141414"/><rect x="1.3" y="7.6" width="4.4" height="3" fill="#141414"/><rect x="1.3" y="11.7" width="4.4" height="3" fill="#141414"/></svg>
<div class="t " style="left:162px;top:923.51px;font-size:14.75px;color:#f0f0f0;">Description</div>
<svg class="r" style="left:144px;top:944px;overflow:hidden;" width="7" height="16" viewBox="0 0 7 16"><rect x="0" y="0" width="7" height="16" fill="#a8a8a8"/><rect x="0" y="0" width="7" height="2.5" fill="#dcdcdc"/><rect x="1.3" y="3.5" width="4.4" height="3" fill="#141414"/><rect x="1.3" y="7.6" width="4.4" height="3" fill="#141414"/><rect x="1.3" y="11.7" width="4.4" height="3" fill="#141414"/></svg>
<div class="t " style="left:162px;top:945.51px;font-size:14.75px;color:#f0f0f0;">Rating</div>
<div class="r" style="left:9px;top:960px;width:414px;height:22px;background:#2b2b2b;"></div>
<svg class="r" style="left:18px;top:965px;" width="6" height="11" viewBox="0 0 6 11"><polygon points="6,0 6,11 0,5.5" fill="#999999"/></svg>
<div class="r" style="left:31px;top:965px;width:296px;height:11px;background:#4d4d4d;"></div>
<svg class="r" style="left:409px;top:965px;" width="6" height="11" viewBox="0 0 6 11"><polygon points="0,0 0,11 6,5.5" fill="#999999"/></svg>
<div class="r" style="left:423px;top:960px;width:22px;height:21px;background:#646464;"></div>
<div class="r" style="left:455px;top:88px;width:264px;height:2px;background:#7160e8;"></div>
<div class="r" style="left:455px;top:90px;width:264px;height:23px;background:#3d3d3d;"></div>
<div class="t " style="left:460px;top:94.30px;font-size:15.0px;color:#ffffff;font-weight:bold;">Account (CDa... 2025.CData)</div>
<svg class="r" style="left:675px;top:98px;" width="11" height="9" viewBox="0 0 11 9"><path d="M0,4.5 H4 M4,1 V8 M4,2.5 H10 V6.5 H4" fill="none" stroke="#d0d0d0" stroke-width="1.2"/></svg>
<svg class="r" style="left:699px;top:97px;" width="12" height="11" viewBox="0 0 12 11"><path d="M0.8,0.8 L11.2,10.2 M11.2,0.8 L0.8,10.2" stroke="#d8d8d8" stroke-width="1.5"/></svg>
<svg class="r" style="left:1264px;top:101px;" width="10" height="5" viewBox="0 0 10 5"><polygon points="0,0 10,0 5.0,5" fill="#d8d8d8"/></svg>
<svg class="r" style="left:1286px;top:95px;" width="13" height="13" viewBox="0 0 13 13"><path d="M5.39,1.47 L5.33,-0.14 L7.07,-0.14 L7.01,1.47 L8.83,2.23 L9.92,1.04 L11.16,2.28 L9.97,3.37 L10.73,5.19 L12.34,5.13 L12.34,6.87 L10.73,6.81 L9.97,8.63 L11.16,9.72 L9.92,10.96 L8.83,9.77 L7.01,10.53 L7.07,12.14 L5.33,12.14 L5.39,10.53 L3.57,9.77 L2.48,10.96 L1.24,9.72 L2.43,8.63 L1.67,6.81 L0.06,6.87 L0.06,5.13 L1.67,5.19 L2.43,3.37 L1.24,2.28 L2.48,1.04 L3.57,2.23 Z" fill="#dadada"/><circle cx="6.2" cy="6" r="2.3" fill="#1f1f1f"/><circle cx="6.2" cy="6" r="1.1" fill="#dadada"/></svg>
<div class="r" style="left:455px;top:114px;width:845px;height:2.5px;background:#7160e8;"></div>
<div class="r" style="left:455px;top:116px;width:824px;height:401px;background:#ffffff;"></div>
<div class="r" style="left:630px;top:116px;width:1px;height:25px;background:#e6e6e6;"></div>
<div class="r" style="left:755px;top:116px;width:1px;height:25px;background:#e6e6e6;"></div>
<div class="r" style="left:880px;top:116px;width:1px;height:25px;background:#e6e6e6;"></div>
<div class="r" style="left:1005px;top:116px;width:1px;height:25px;background:#e6e6e6;"></div>
<div class="r" style="left:1130px;top:116px;width:1px;height:25px;background:#e6e6e6;"></div>
<div class="r" style="left:1255px;top:116px;width:1px;height:25px;background:#e6e6e6;"></div>
<div class="r" style="left:505px;top:116px;width:1px;height:401px;background:#a0a0a0;"></div>
<div class="r" style="left:455px;top:141px;width:824px;height:1px;background:#a0a0a0;"></div>
<div class="t " style="left:514px;top:122.73px;font-size:14.5px;color:#1e1e1e;">Id</div>
<div class="t " style="left:639px;top:122.73px;font-size:14.5px;color:#1e1e1e;">IsDeleted</div>
<div class="t " style="left:764px;top:122.73px;font-size:14.5px;color:#1e1e1e;">MasterRecordId</div>
<div class="t " style="left:889px;top:122.73px;font-size:14.5px;color:#1e1e1e;">Name</div>
<div class="t " style="left:1014px;top:122.73px;font-size:14.5px;color:#1e1e1e;">Type</div>
<div class="t " style="left:1139px;top:122.73px;font-size:14.5px;color:#1e1e1e;">RecordTypeId</div>
<div class="t " style="left:1264px;top:122.73px;font-size:14.5px;color:#1e1e1e;">ParentId</div>
<div class="r" style="left:630px;top:142px;width:1px;height:375px;background:#f0f0f0;"></div>
<div class="r" style="left:755px;top:142px;width:1px;height:375px;background:#f0f0f0;"></div>
<div class="r" style="left:880px;top:142px;width:1px;height:375px;background:#f0f0f0;"></div>
<div class="r" style="left:1005px;top:142px;width:1px;height:375px;background:#f0f0f0;"></div>
<div class="r" style="left:1130px;top:142px;width:1px;height:375px;background:#f0f0f0;"></div>
<div class="r" style="left:1255px;top:142px;width:1px;height:375px;background:#f0f0f0;"></div>
<div class="r" style="left:455px;top:167px;width:50px;height:1px;background:#f0f0f0;"></div>
<div class="r" style="left:506px;top:167px;width:773px;height:1px;background:#f0f0f0;"></div>
<div class="r" style="left:506px;top:142px;width:124px;height:25px;background:#99c9ef;"></div>
<div class="t " style="left:510px;top:149.03px;font-size:14.5px;color:#ffffff;">0011W00001uN...</div>
<svg class="r" style="left:462px;top:151px;" width="7" height="11" viewBox="0 0 7 11"><polygon points="0,0 7,5.5 0,11" fill="#3c3c3c"/></svg>
<div class="t " style="left:635px;top:149.03px;font-size:14.5px;color:#1e1e1e;">False</div>
<div class="t " style="left:760px;top:149.03px;font-size:14.5px;color:#1e1e1e;font-style:italic;">NULL</div>
<div class="t " style="left:885px;top:149.03px;font-size:14.5px;color:#1e1e1e;">Check10129</div>
<div class="t " style="left:1010px;top:149.03px;font-size:14.5px;color:#1e1e1e;">Customer</div>
<div class="t " style="left:1135px;top:149.03px;font-size:14.5px;color:#1e1e1e;">01240000000M...</div>
<div class="t " style="left:1260px;top:149.03px;font-size:14.5px;color:#1e1e1e;font-style:italic;width:19px;overflow:hidden;">NU</div>
<div class="r" style="left:455px;top:193px;width:50px;height:1px;background:#f0f0f0;"></div>
<div class="r" style="left:506px;top:193px;width:773px;height:1px;background:#f0f0f0;"></div>
<div class="t " style="left:510px;top:175.03px;font-size:14.5px;color:#1e1e1e;">0018Z00003Hd...</div>
<div class="t " style="left:635px;top:175.03px;font-size:14.5px;color:#1e1e1e;">False</div>
<div class="t " style="left:760px;top:175.03px;font-size:14.5px;color:#1e1e1e;font-style:italic;">NULL</div>
<div class="t " style="left:885px;top:175.03px;font-size:14.5px;color:#1e1e1e;">Check10129</div>
<div class="t " style="left:1010px;top:175.03px;font-size:14.5px;color:#1e1e1e;font-style:italic;">NULL</div>
<div class="t " style="left:1135px;top:175.03px;font-size:14.5px;color:#1e1e1e;">01240000000M...</div>
<div class="t " style="left:1260px;top:175.03px;font-size:14.5px;color:#1e1e1e;font-style:italic;width:19px;overflow:hidden;">NU</div>
<div class="r" style="left:455px;top:219px;width:50px;height:1px;background:#f0f0f0;"></div>
<div class="r" style="left:506px;top:219px;width:773px;height:1px;background:#f0f0f0;"></div>
<div class="t " style="left:510px;top:201.03px;font-size:14.5px;color:#1e1e1e;">001KY00000D5...</div>
<div class="t " style="left:635px;top:201.03px;font-size:14.5px;color:#1e1e1e;">False</div>
<div class="t " style="left:760px;top:201.03px;font-size:14.5px;color:#1e1e1e;font-style:italic;">NULL</div>
<div class="t " style="left:885px;top:201.03px;font-size:14.5px;color:#1e1e1e;">Postage &amp; Deliv...</div>
<div class="t " style="left:1010px;top:201.03px;font-size:14.5px;color:#1e1e1e;font-style:italic;">NULL</div>
<div class="t " style="left:1135px;top:201.03px;font-size:14.5px;color:#1e1e1e;">01240000000M...</div>
<div class="t " style="left:1260px;top:201.03px;font-size:14.5px;color:#1e1e1e;font-style:italic;width:19px;overflow:hidden;">NU</div>
<div class="r" style="left:455px;top:245px;width:50px;height:1px;background:#f0f0f0;"></div>
<div class="r" style="left:506px;top:245px;width:773px;height:1px;background:#f0f0f0;"></div>
<div class="t " style="left:510px;top:227.03px;font-size:14.5px;color:#1e1e1e;">001KY00000D5...</div>
<div class="t " style="left:635px;top:227.03px;font-size:14.5px;color:#1e1e1e;">False</div>
<div class="t " style="left:760px;top:227.03px;font-size:14.5px;color:#1e1e1e;font-style:italic;">NULL</div>
<div class="t " style="left:885px;top:227.03px;font-size:14.5px;color:#1e1e1e;">ArcTeddyAcct</div>
<div class="t " style="left:1010px;top:227.03px;font-size:14.5px;color:#1e1e1e;font-style:italic;">NULL</div>
<div class="t " style="left:1135px;top:227.03px;font-size:14.5px;color:#1e1e1e;">01240000000M...</div>
<div class="t " style="left:1260px;top:227.03px;font-size:14.5px;color:#1e1e1e;font-style:italic;width:19px;overflow:hidden;">NU</div>
<div class="r" style="left:455px;top:271px;width:50px;height:1px;background:#f0f0f0;"></div>
<div class="r" style="left:506px;top:271px;width:773px;height:1px;background:#f0f0f0;"></div>
<div class="t " style="left:510px;top:253.03px;font-size:14.5px;color:#1e1e1e;">001KY00000D5...</div>
<div class="t " style="left:635px;top:253.03px;font-size:14.5px;color:#1e1e1e;">False</div>
<div class="t " style="left:760px;top:253.03px;font-size:14.5px;color:#1e1e1e;font-style:italic;">NULL</div>
<div class="t " style="left:885px;top:253.03px;font-size:14.5px;color:#1e1e1e;">ArcJamesAcct</div>
<div class="t " style="left:1010px;top:253.03px;font-size:14.5px;color:#1e1e1e;font-style:italic;">NULL</div>
<div class="t " style="left:1135px;top:253.03px;font-size:14.5px;color:#1e1e1e;">01240000000M...</div>
<div class="t " style="left:1260px;top:253.03px;font-size:14.5px;color:#1e1e1e;font-style:italic;width:19px;overflow:hidden;">NU</div>
<div class="r" style="left:455px;top:297px;width:50px;height:1px;background:#f0f0f0;"></div>
<div class="r" style="left:506px;top:297px;width:773px;height:1px;background:#f0f0f0;"></div>
<div class="t " style="left:510px;top:279.03px;font-size:14.5px;color:#1e1e1e;">001KY00000D5...</div>
<div class="t " style="left:635px;top:279.03px;font-size:14.5px;color:#1e1e1e;">False</div>
<div class="t " style="left:760px;top:279.03px;font-size:14.5px;color:#1e1e1e;font-style:italic;">NULL</div>
<div class="t " style="left:885px;top:279.03px;font-size:14.5px;color:#1e1e1e;">Aditya123456</div>
<div class="t " style="left:1010px;top:279.03px;font-size:14.5px;color:#1e1e1e;font-style:italic;">NULL</div>
<div class="t " style="left:1135px;top:279.03px;font-size:14.5px;color:#1e1e1e;">01240000000M...</div>
<div class="t " style="left:1260px;top:279.03px;font-size:14.5px;color:#1e1e1e;font-style:italic;width:19px;overflow:hidden;">NU</div>
<div class="r" style="left:455px;top:323px;width:50px;height:1px;background:#f0f0f0;"></div>
<div class="r" style="left:506px;top:323px;width:773px;height:1px;background:#f0f0f0;"></div>
<div class="t " style="left:510px;top:305.03px;font-size:14.5px;color:#1e1e1e;">001KY00000D5...</div>
<div class="t " style="left:635px;top:305.03px;font-size:14.5px;color:#1e1e1e;">False</div>
<div class="t " style="left:760px;top:305.03px;font-size:14.5px;color:#1e1e1e;font-style:italic;">NULL</div>
<div class="t " style="left:885px;top:305.03px;font-size:14.5px;color:#1e1e1e;">仮払消費税</div>
<div class="t " style="left:1010px;top:305.03px;font-size:14.5px;color:#1e1e1e;font-style:italic;">NULL</div>
<div class="t " style="left:1135px;top:305.03px;font-size:14.5px;color:#1e1e1e;">01240000000M...</div>
<div class="t " style="left:1260px;top:305.03px;font-size:14.5px;color:#1e1e1e;font-style:italic;width:19px;overflow:hidden;">NU</div>
<div class="r" style="left:455px;top:349px;width:50px;height:1px;background:#f0f0f0;"></div>
<div class="r" style="left:506px;top:349px;width:773px;height:1px;background:#f0f0f0;"></div>
<div class="t " style="left:510px;top:331.03px;font-size:14.5px;color:#1e1e1e;">001KY00000D5...</div>
<div class="t " style="left:635px;top:331.03px;font-size:14.5px;color:#1e1e1e;">False</div>
<div class="t " style="left:760px;top:331.03px;font-size:14.5px;color:#1e1e1e;font-style:italic;">NULL</div>
<div class="t " style="left:885px;top:331.03px;font-size:14.5px;color:#1e1e1e;">Contract Payabl...</div>
<div class="t " style="left:1010px;top:331.03px;font-size:14.5px;color:#1e1e1e;font-style:italic;">NULL</div>
<div class="t " style="left:1135px;top:331.03px;font-size:14.5px;color:#1e1e1e;">01240000000M...</div>
<div class="t " style="left:1260px;top:331.03px;font-size:14.5px;color:#1e1e1e;font-style:italic;width:19px;overflow:hidden;">NU</div>
<div class="r" style="left:455px;top:375px;width:50px;height:1px;background:#f0f0f0;"></div>
<div class="r" style="left:506px;top:375px;width:773px;height:1px;background:#f0f0f0;"></div>
<div class="t " style="left:510px;top:357.03px;font-size:14.5px;color:#1e1e1e;">001KY00000D5...</div>
<div class="t " style="left:635px;top:357.03px;font-size:14.5px;color:#1e1e1e;">False</div>
<div class="t " style="left:760px;top:357.03px;font-size:14.5px;color:#1e1e1e;font-style:italic;">NULL</div>
<div class="t " style="left:885px;top:357.03px;font-size:14.5px;color:#1e1e1e;">Professional Fees</div>
<div class="t " style="left:1010px;top:357.03px;font-size:14.5px;color:#1e1e1e;font-style:italic;">NULL</div>
<div class="t " style="left:1135px;top:357.03px;font-size:14.5px;color:#1e1e1e;">01240000000M...</div>
<div class="t " style="left:1260px;top:357.03px;font-size:14.5px;color:#1e1e1e;font-style:italic;width:19px;overflow:hidden;">NU</div>
<div class="r" style="left:455px;top:401px;width:50px;height:1px;background:#f0f0f0;"></div>
<div class="r" style="left:506px;top:401px;width:773px;height:1px;background:#f0f0f0;"></div>
<div class="t " style="left:510px;top:383.03px;font-size:14.5px;color:#1e1e1e;">001KY00000D5...</div>
<div class="t " style="left:635px;top:383.03px;font-size:14.5px;color:#1e1e1e;">False</div>
<div class="t " style="left:760px;top:383.03px;font-size:14.5px;color:#1e1e1e;font-style:italic;">NULL</div>
<div class="t " style="left:885px;top:383.03px;font-size:14.5px;color:#1e1e1e;">newCCA</div>
<div class="t " style="left:1010px;top:383.03px;font-size:14.5px;color:#1e1e1e;font-style:italic;">NULL</div>
<div class="t " style="left:1135px;top:383.03px;font-size:14.5px;color:#1e1e1e;">01240000000M...</div>
<div class="t " style="left:1260px;top:383.03px;font-size:14.5px;color:#1e1e1e;font-style:italic;width:19px;overflow:hidden;">NU</div>
<div class="r" style="left:455px;top:427px;width:50px;height:1px;background:#f0f0f0;"></div>
<div class="r" style="left:506px;top:427px;width:773px;height:1px;background:#f0f0f0;"></div>
<div class="t " style="left:510px;top:409.03px;font-size:14.5px;color:#1e1e1e;">001KY00000D5...</div>
<div class="t " style="left:635px;top:409.03px;font-size:14.5px;color:#1e1e1e;">False</div>
<div class="t " style="left:760px;top:409.03px;font-size:14.5px;color:#1e1e1e;font-style:italic;">NULL</div>
<div class="t " style="left:885px;top:409.03px;font-size:14.5px;color:#1e1e1e;">google</div>
<div class="t " style="left:1010px;top:409.03px;font-size:14.5px;color:#1e1e1e;font-style:italic;">NULL</div>
<div class="t " style="left:1135px;top:409.03px;font-size:14.5px;color:#1e1e1e;">01240000000M...</div>
<div class="t " style="left:1260px;top:409.03px;font-size:14.5px;color:#1e1e1e;font-style:italic;width:19px;overflow:hidden;">NU</div>
<div class="r" style="left:455px;top:453px;width:50px;height:1px;background:#f0f0f0;"></div>
<div class="r" style="left:506px;top:453px;width:773px;height:1px;background:#f0f0f0;"></div>
<div class="t " style="left:510px;top:435.03px;font-size:14.5px;color:#1e1e1e;">001KY00000D5...</div>
<div class="t " style="left:635px;top:435.03px;font-size:14.5px;color:#1e1e1e;">False</div>
<div class="t " style="left:760px;top:435.03px;font-size:14.5px;color:#1e1e1e;font-style:italic;">NULL</div>
<div class="t " style="left:885px;top:435.03px;font-size:14.5px;color:#1e1e1e;">Payroll Expenses</div>
<div class="t " style="left:1010px;top:435.03px;font-size:14.5px;color:#1e1e1e;font-style:italic;">NULL</div>
<div class="t " style="left:1135px;top:435.03px;font-size:14.5px;color:#1e1e1e;">01240000000M...</div>
<div class="t " style="left:1260px;top:435.03px;font-size:14.5px;color:#1e1e1e;font-style:italic;width:19px;overflow:hidden;">NU</div>
<div class="r" style="left:455px;top:479px;width:50px;height:1px;background:#f0f0f0;"></div>
<div class="r" style="left:506px;top:479px;width:773px;height:1px;background:#f0f0f0;"></div>
<div class="t " style="left:510px;top:461.03px;font-size:14.5px;color:#1e1e1e;">001KY00000D5...</div>
<div class="t " style="left:635px;top:461.03px;font-size:14.5px;color:#1e1e1e;">False</div>
<div class="t " style="left:760px;top:461.03px;font-size:14.5px;color:#1e1e1e;font-style:italic;">NULL</div>
<div class="t " style="left:885px;top:461.03px;font-size:14.5px;color:#1e1e1e;">Ask My Account...</div>
<div class="t " style="left:1010px;top:461.03px;font-size:14.5px;color:#1e1e1e;font-style:italic;">NULL</div>
<div class="t " style="left:1135px;top:461.03px;font-size:14.5px;color:#1e1e1e;">01240000000M...</div>
<div class="t " style="left:1260px;top:461.03px;font-size:14.5px;color:#1e1e1e;font-style:italic;width:19px;overflow:hidden;">NU</div>
<div class="r" style="left:455px;top:505px;width:50px;height:1px;background:#f0f0f0;"></div>
<div class="r" style="left:506px;top:505px;width:773px;height:1px;background:#f0f0f0;"></div>
<div class="t " style="left:510px;top:487.03px;font-size:14.5px;color:#1e1e1e;">001KY00000D5...</div>
<div class="t " style="left:635px;top:487.03px;font-size:14.5px;color:#1e1e1e;">False</div>
<div class="t " style="left:760px;top:487.03px;font-size:14.5px;color:#1e1e1e;font-style:italic;">NULL</div>
<div class="t " style="left:885px;top:487.03px;font-size:14.5px;color:#1e1e1e;">Unapproved Ex...</div>
<div class="t " style="left:1010px;top:487.03px;font-size:14.5px;color:#1e1e1e;font-style:italic;">NULL</div>
<div class="t " style="left:1135px;top:487.03px;font-size:14.5px;color:#1e1e1e;">01240000000M...</div>
<div class="t " style="left:1260px;top:487.03px;font-size:14.5px;color:#1e1e1e;font-style:italic;width:19px;overflow:hidden;">NU</div>
<div class="r" style="left:455px;top:531px;width:50px;height:1px;background:#f0f0f0;"></div>
<div class="r" style="left:506px;top:531px;width:773px;height:1px;background:#f0f0f0;"></div>
<div class="t " style="left:510px;top:513.03px;font-size:14.5px;color:#1e1e1e;">001KY00000D5...</div>
<div class="t " style="left:635px;top:513.03px;font-size:14.5px;color:#1e1e1e;">False</div>
<div class="t " style="left:760px;top:513.03px;font-size:14.5px;color:#1e1e1e;font-style:italic;">NULL</div>
<div class="t " style="left:885px;top:513.03px;font-size:14.5px;color:#1e1e1e;">Advertising</div>
<div class="t " style="left:1010px;top:513.03px;font-size:14.5px;color:#1e1e1e;font-style:italic;">NULL</div>
<div class="t " style="left:1135px;top:513.03px;font-size:14.5px;color:#1e1e1e;">01240000000M...</div>
<div class="t " style="left:1260px;top:513.03px;font-size:14.5px;color:#1e1e1e;font-style:italic;width:19px;overflow:hidden;">NU</div>
<div class="r" style="left:1279px;top:116px;width:21px;height:401px;background:#2b2b2b;"></div>
<svg class="r" style="left:1284px;top:124px;" width="11" height="6" viewBox="0 0 11 6"><polygon points="0,6 11,6 5.5,0" fill="#999999"/></svg>
<div class="r" style="left:1284px;top:137px;width:10px;height:21px;background:#4d4d4d;"></div>
<svg class="r" style="left:1284px;top:504px;" width="11" height="6" viewBox="0 0 11 6"><polygon points="0,0 11,0 5.5,6" fill="#9a9a9a"/></svg>
<div class="r" style="left:455px;top:517px;width:824px;height:20px;background:#2b2b2b;"></div>
<svg class="r" style="left:463px;top:522px;" width="6" height="11" viewBox="0 0 6 11"><polygon points="6,0 6,11 0,5.5" fill="#999999"/></svg>
<div class="r" style="left:476px;top:522px;width:34px;height:11px;background:#4d4d4d;"></div>
<svg class="r" style="left:1266px;top:522px;" width="6" height="11" viewBox="0 0 6 11"><polygon points="0,0 0,11 6,5.5" fill="#999999"/></svg>
<div class="r" style="left:1279px;top:517px;width:21px;height:20px;background:#f0f0f0;"></div>
<div class="r" style="left:455px;top:537px;width:845px;height:32px;background:linear-gradient(#fdfdfd,#ececec);"></div>
<svg class="r" style="left:461px;top:545px;" width="14" height="15" viewBox="0 0 14 15"><rect x="0" y="0" width="3" height="15" fill="#b8b8b8"/><polygon points="13,0 13,15 4,7.5" fill="#b8b8b8"/></svg>
<svg class="r" style="left:494px;top:545px;" width="9" height="14" viewBox="0 0 9 14"><polygon points="9,0 9,14 0,7" fill="#b8b8b8"/></svg>
<div class="r" style="left:516px;top:543px;width:1px;height:21px;background:#a8a8a8;"></div>
<div class="r" style="left:519px;top:543px;width:51px;height:23px;background:#ffffff;"></div>
<div class="t " style="left:524px;top:546.23px;font-size:14.5px;color:#1e1e1e;">1</div>
<div class="t " style="left:575px;top:546.23px;font-size:14.5px;color:#1e1e1e;">of 1792</div>
<div class="r" style="left:633px;top:543px;width:1px;height:21px;background:#a8a8a8;"></div>
<svg class="r" style="left:644px;top:545px;" width="8" height="14" viewBox="0 0 8 14"><defs><linearGradient id="bl" x1="0" x2="1"><stop offset="0" stop-color="#2a6fd8"/><stop offset="1" stop-color="#5aa0f0"/></linearGradient></defs><polygon points="0,0 8,7 0,14" fill="url(#bl)"/></svg>
<svg class="r" style="left:671px;top:545px;" width="14" height="15" viewBox="0 0 14 15"><defs><linearGradient id="bl2" x1="0" x2="1"><stop offset="0" stop-color="#2a62c8"/><stop offset="1" stop-color="#5a9cf0"/></linearGradient></defs><polygon points="0,0 9,7.5 0,15" fill="url(#bl2)"/><rect x="10" y="0" width="3.5" height="15" fill="#3a78d8"/></svg>
<svg class="r" style="left:700px;top:544px;" width="15" height="17" viewBox="0 0 15 17"><line x1="5.50" y1="4.50" x2="8.70" y2="4.50" stroke="#c4c4c4" stroke-width="1.3"/><line x1="5.21" y1="5.21" x2="7.47" y2="7.47" stroke="#c4c4c4" stroke-width="1.3"/><line x1="4.50" y1="5.50" x2="4.50" y2="8.70" stroke="#c4c4c4" stroke-width="1.3"/><line x1="3.79" y1="5.21" x2="1.53" y2="7.47" stroke="#c4c4c4" stroke-width="1.3"/><line x1="3.50" y1="4.50" x2="0.30" y2="4.50" stroke="#c4c4c4" stroke-width="1.3"/><line x1="3.79" y1="3.79" x2="1.53" y2="1.53" stroke="#c4c4c4" stroke-width="1.3"/><line x1="4.50" y1="3.50" x2="4.50" y2="0.30" stroke="#c4c4c4" stroke-width="1.3"/><line x1="5.21" y1="3.79" x2="7.47" y2="1.53" stroke="#c4c4c4" stroke-width="1.3"/><polygon points="6,7 13,11.5 6,16" fill="#b4b4b4"/></svg>
<div class="r" style="left:726px;top:543px;width:1px;height:21px;background:#a8a8a8;"></div>
<svg class="r" style="left:733px;top:543px;" width="19" height="19" viewBox="0 0 19 19"><circle cx="9.5" cy="9.5" r="9" fill="#e2160f"/><rect x="5.5" y="5.5" width="8" height="8" fill="#ffffff"/></svg>
<div class="r" style="left:761px;top:543px;width:1px;height:21px;background:#a8a8a8;"></div>
<div class="t " style="left:768px;top:546.23px;font-size:14.5px;color:#1e1e1e;">Retrieving Data ...</div>
<div class="r" style="left:1229px;top:543px;width:1px;height:21px;background:#a8a8a8;"></div>
<div class="r" style="left:1296px;top:543px;width:1px;height:21px;background:#a8a8a8;"></div>
<div class="r" style="left:454px;top:578px;width:847px;height:381px;border:1px solid #3f3f3f;box-sizing:border-box;border-bottom:none;"></div>
<div class="t " style="left:460px;top:585.23px;font-size:14.5px;color:#c4c4c4;">Developer PowerShell</div>
<svg class="r" style="left:1238px;top:588px;" width="10" height="5" viewBox="0 0 10 5"><polygon points="0,0 10,0 5.0,5" fill="#d8d8d8"/></svg>
<svg class="r" style="left:1259px;top:585px;" width="10" height="14" viewBox="0 0 10 14"><path d="M2.5,0.5 H7.5 V7 L9.5,8.5 H0.5 L2.5,7 Z" fill="#d8d8d8" stroke="none"/><rect x="4" y="1.5" width="2" height="5" fill="#1f1f1f"/><line x1="5" y1="8.5" x2="5" y2="14" stroke="#d8d8d8" stroke-width="1.3"/></svg>
<svg class="r" style="left:1279px;top:587px;" width="12" height="11" viewBox="0 0 12 11"><path d="M0.8,0.8 L11.2,10.2 M11.2,0.8 L0.8,10.2" stroke="#d8d8d8" stroke-width="1.5"/></svg>
<svg class="r" style="left:465px;top:613px;" width="17" height="17" viewBox="0 0 17 17"><path d="M8.5,0 V17 M0,8.5 H17" stroke="#5dd35f" stroke-width="1.3"/></svg>
<div class="t " style="left:490px;top:615.73px;font-size:14.5px;color:#dcdcdc;">Developer PowerShell</div>
<svg class="r" style="left:641px;top:621px;" width="8" height="4" viewBox="0 0 8 4"><polygon points="0,0 8,0 4.0,4" fill="#d0d0d0"/></svg>
<div class="r" style="left:656px;top:611px;width:1px;height:23px;background:#3a3a3a;"></div>
<svg class="r" style="left:665px;top:614px;" width="19" height="19" viewBox="0 0 19 19"><rect x="6.5" y="0.7" width="11.8" height="12" rx="1" fill="#333" stroke="#c0c0c0" stroke-width="1.3"/><rect x="0.7" y="5.5" width="11.8" height="12.8" rx="1" fill="#3a3a3a" stroke="#c8c8c8" stroke-width="1.3"/></svg>
<svg class="r" style="left:693px;top:614px;" width="18" height="19" viewBox="0 0 18 19"><path d="M0.7,3 H4 M12,3 H15 V8 M0.7,3 V18 H8" fill="none" stroke="#484848" stroke-width="1.2"/><rect x="4.5" y="0.7" width="7" height="3.5" fill="none" stroke="#484848"/><rect x="9.5" y="9.5" width="8" height="8.5" fill="none" stroke="#484848" stroke-width="1.2"/></svg>
<div class="r" style="left:719px;top:611px;width:1px;height:23px;background:#3a3a3a;"></div>
<svg class="r" style="left:729px;top:614px;" width="19" height="19" viewBox="0 0 19 19"><path d="M8.21,3.03 L8.12,0.81 L10.88,0.81 L10.79,3.03 L13.17,4.01 L14.67,2.38 L16.62,4.33 L14.99,5.83 L15.97,8.21 L18.19,8.12 L18.19,10.88 L15.97,10.79 L14.99,13.17 L16.62,14.67 L14.67,16.62 L13.17,14.99 L10.79,15.97 L10.88,18.19 L8.12,18.19 L8.21,15.97 L5.83,14.99 L4.33,16.62 L2.38,14.67 L4.01,13.17 L3.03,10.79 L0.81,10.88 L0.81,8.12 L3.03,8.21 L4.01,5.83 L2.38,4.33 L4.33,2.38 L5.83,4.01 Z" fill="none" stroke="#d8d8d8" stroke-width="1.3" stroke-linejoin="round"/><circle cx="9.5" cy="9.5" r="2.8" fill="none" stroke="#d8d8d8" stroke-width="1.3"/></svg>
<div class="m" style="left:454px;top:643px;font-size:20px;letter-spacing:-3px;color:#e0e0e0;">**********************************************************************</div>
<div class="m" style="left:454px;top:664px;font-size:20px;letter-spacing:-3px;color:#e0e0e0;">**</div>
<div class="m" style="left:455px;top:664.51px;font-size:15.0px;color:#e8e8e8;transform:scaleY(1.09);transform-origin:0 11.49px;">   Visual Studio 2022 Developer PowerShell v17.14.16</div>
<div class="m" style="left:454px;top:684px;font-size:20px;letter-spacing:-3px;color:#e0e0e0;">**</div>
<div class="m" style="left:455px;top:684.51px;font-size:15.0px;color:#e8e8e8;transform:scaleY(1.09);transform-origin:0 11.49px;">   Copyright (c) 2025 Microsoft Corporation</div>
<div class="m" style="left:454px;top:703px;font-size:20px;letter-spacing:-3px;color:#e0e0e0;">**********************************************************************</div>
<div class="m" style="left:455px;top:724.51px;font-size:15.0px;color:#e8e8e8;transform:scaleY(1.09);transform-origin:0 11.49px;">PS C:\Users\AnushaMB\source\repos&gt;</div>
<div class="r" style="left:770px;top:720px;width:9px;height:19px;background:#e0e0e0;"></div>
<div class="r" style="left:1279px;top:640px;width:20px;height:317px;background:#2b2b2b;"></div>
<svg class="r" style="left:1284px;top:647px;" width="10" height="6" viewBox="0 0 10 6"><polygon points="0,6 10,6 5.0,0" fill="#999999"/></svg>
<svg class="r" style="left:1284px;top:944px;" width="10" height="6" viewBox="0 0 10 6"><polygon points="0,0 10,0 5,6" fill="#9a9a9a"/></svg>
<div class="r" style="left:612px;top:957px;width:689px;height:1px;background:#3f3f3f;"></div>
<div class="r" style="left:454px;top:957px;width:159px;height:25px;border:1px solid #3f3f3f;box-sizing:border-box;border-top:none;"></div>
<div class="t " style="left:462px;top:962.73px;font-size:14.5px;color:#f0f0f0;">Developer PowerShell</div>
<div class="t " style="left:620px;top:962.73px;font-size:14.5px;color:#b4b4b4;">Output</div>
<div class="r" style="left:1310px;top:88px;width:604px;height:871px;border:1px solid #3f3f3f;box-sizing:border-box;border-bottom:none;"></div>
<div class="t " style="left:1315px;top:95.23px;font-size:14.5px;color:#c4c4c4;">Git Changes</div>
<svg class="r" style="left:1851px;top:98px;" width="10" height="5" viewBox="0 0 10 5"><polygon points="0,0 10,0 5.0,5" fill="#d8d8d8"/></svg>
<svg class="r" style="left:1871px;top:95px;" width="10" height="14" viewBox="0 0 10 14"><path d="M2.5,0.5 H7.5 V7 L9.5,8.5 H0.5 L2.5,7 Z" fill="#d8d8d8" stroke="none"/><rect x="4" y="1.5" width="2" height="5" fill="#1f1f1f"/><line x1="5" y1="8.5" x2="5" y2="14" stroke="#d8d8d8" stroke-width="1.3"/></svg>
<svg class="r" style="left:1892px;top:97px;" width="12" height="11" viewBox="0 0 12 11"><path d="M0.8,0.8 L11.2,10.2 M11.2,0.8 L0.8,10.2" stroke="#d8d8d8" stroke-width="1.5"/></svg>
<div class="t " style="left:1323px;top:144.80px;font-size:15.0px;color:#e8e8e8;">Git version control isn't being used yet.</div>
<div class="t " style="left:1323px;top:184.30px;font-size:15.0px;color:#e8e8e8;">Initialize, back up, and share your repository.</div>
<div class="r" style="left:1323px;top:211px;width:195px;height:29px;background:#3c3c3e;border:1px solid #4f4f52;box-sizing:border-box;"></div>
<svg class="r" style="left:1331px;top:216px;" width="21" height="21" viewBox="0 0 21 21"><path d="M3.5,0 V7 M0,3.5 H7 M1,1 L6,6 M6,1 L1,6" stroke="#f0e070" stroke-width="1"/><rect x="8" y="8" width="10" height="10" transform="rotate(45 13 13)" fill="#e8482e"/><path d="M11,10 L14,13 V17 M14,13 L16,12" stroke="#1f1f1f" stroke-width="1.1" fill="none"/></svg>
<div class="t " style="left:1359px;top:219.73px;font-size:14.5px;color:#e8e8e8;">Create Git Repository...</div>
<div class="t " style="left:1323px;top:263.30px;font-size:15.0px;color:#e8e8e8;">Get code from an online repository like GitHub or Azure DevOps.</div>
<div class="r" style="left:1323px;top:290px;width:167px;height:29px;background:#3c3c3e;border:1px solid #4f4f52;box-sizing:border-box;"></div>
<svg class="r" style="left:1331px;top:296px;" width="19" height="19" viewBox="0 0 19 19"><path d="M9,0 V10 M5,6 L9,10 L13,6" fill="none" stroke="#4a9eea" stroke-width="1.4"/><rect x="1" y="12" width="17" height="6" rx="2" fill="none" stroke="#c8c8c8" stroke-width="1.3"/><rect x="12" y="14.5" width="3" height="1.2" fill="#c8c8c8"/></svg>
<div class="t " style="left:1359px;top:298.73px;font-size:14.5px;color:#e8e8e8;">Clone Repository...</div>
<div class="t " style="left:1323px;top:342.30px;font-size:15.0px;color:#e8e8e8;">Open an existing local repository using the Git menu.</div>
<div class="t " style="left:1323px;top:383.27px;font-size:14.8px;color:#6aa3d8;">Read an overview of using Git in Visual Studio.</div>
<div class="r" style="left:1402px;top:958px;width:512px;height:1px;background:#3f3f3f;"></div>
<div class="r" style="left:1310px;top:958px;width:93px;height:24px;border:1px solid #3f3f3f;box-sizing:border-box;border-top:none;"></div>
<div class="t " style="left:1317px;top:963.23px;font-size:14.5px;color:#f0f0f0;">Git Changes</div>
<div class="t " style="left:1410px;top:963.23px;font-size:14.5px;color:#b4b4b4;">Solution Explorer</div>
<div class="r" style="left:0px;top:990px;width:1914px;height:31px;background:#464646;"></div>
<div class="r" style="left:0px;top:1021px;width:1914px;height:4px;background:#182c32;"></div>
<svg class="r" style="left:5px;top:995px;" width="21" height="20" viewBox="0 0 21 20"><path d="M0.8,0.8 H19.2 V14.2 H13 L10,17.5 L7,14.2 H0.8 Z" fill="none" stroke="#e8e8e8" stroke-width="1.4"/></svg>
<div class="t " style="left:35px;top:998.73px;font-size:14.5px;color:#f0f0f0;">Ready</div>
<svg class="r" style="left:1696px;top:997px;" width="18" height="17" viewBox="0 0 18 17"><rect x="0.7" y="0.7" width="16.6" height="3.6" fill="none" stroke="#c8c8c8" stroke-width="1.3"/><path d="M2,4.3 V16.3 H16 V4.3" fill="none" stroke="#c8c8c8" stroke-width="1.3"/><path d="M6.5,5 V11.5 L9,9.5 L11.5,11.5 V5" fill="none" stroke="#c8c8c8" stroke-width="1.2"/></svg>
<div class="t " style="left:1723px;top:998.73px;font-size:14.5px;color:#f0f0f0;">Select Repository</div>
<svg class="r" style="left:1844px;top:1003px;" width="10" height="6" viewBox="0 0 10 6"><polygon points="0,6 10,6 5.0,0" fill="#f0f0f0"/></svg>
<svg class="r" style="left:1881px;top:995px;" width="24" height="24" viewBox="0 0 24 24"><path d="M2,15 Q3,13 3,9 Q3,2 8,2 Q13,2 13,9 Q13,13 14,15 Z" fill="none" stroke="#c8c8c8" stroke-width="1.2"/><circle cx="16.6" cy="16" r="7.5" fill="#f08c95"/><text x="16.6" y="20.5" font-size="11" text-anchor="middle" fill="#202020" font-family="Liberation Sans">1</text></svg>
</body></html>
